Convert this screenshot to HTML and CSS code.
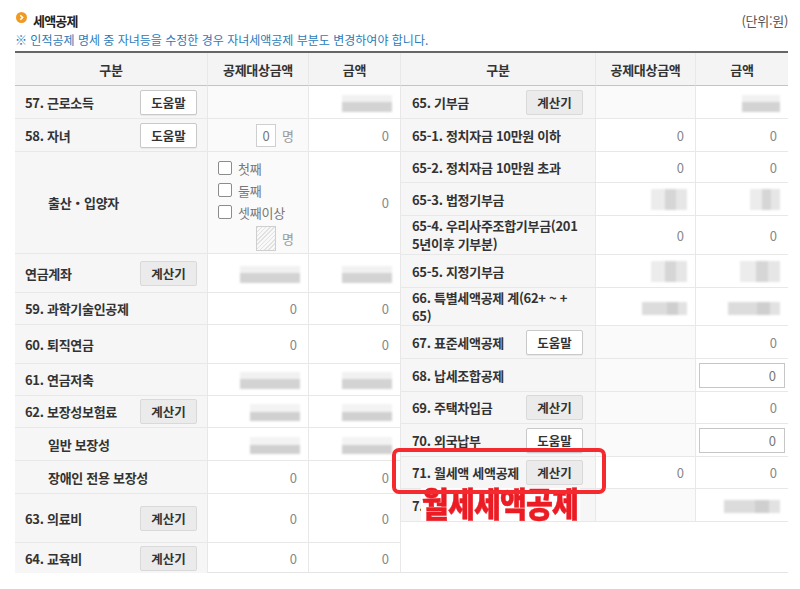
FILE: index.html
```html
<!DOCTYPE html>
<html lang="ko">
<head>
<meta charset="utf-8">
<title>세액공제</title>
<link rel="stylesheet" href="styles.css">
</head>
<body>
<div class="page">
  <div class="head">
    <h2 class="title"><svg class="bullet" width="11" height="11" viewBox="0 0 11 11"><circle cx="5.5" cy="5.5" r="5.5" fill="#f29a1f"/><path d="M4.3 3.2 L6.6 5.5 L4.3 7.8" fill="none" stroke="#fff" stroke-width="1.6"/></svg>세액공제</h2>
    <span class="unit">(단위:원)</span>
  </div>
  <p class="note">※ 인적공제 명세 중 자녀등을 수정한 경우 자녀세액공제 부분도 변경하여야 합니다.</p>

  <div class="grid">
    <table class="tbl tbl-left">
      <colgroup><col class="c1l"><col class="c2"><col class="c3"></colgroup>
      <thead>
        <tr><th>구분</th><th>공제대상금액</th><th>금액</th></tr>
      </thead>
      <tbody>
        <tr class="r33"><td class="lab"><div class="lab-in"><span>57. 근로소득</span><button class="btn help">도움말</button></div></td><td class="shade"></td><td class="num"><span class="blur bw50"></span></td></tr>
        <tr class="r33"><td class="lab"><div class="lab-in"><span>58. 자녀</span><button class="btn help">도움말</button></div></td><td class="shade cnt-cell"><span class="mini">0</span><span class="mu">명</span></td><td class="num">0</td></tr>
        <tr class="r102"><td class="lab sub">출산・입양자</td><td class="shade kids-cell">
          <div class="kids">
            <label class="ck"><span class="box"></span>첫째</label>
            <label class="ck"><span class="box"></span>둘째</label>
            <label class="ck"><span class="box"></span>셋째이상</label>
            <div class="hatchline"><span class="hatch"></span><span class="mu">명</span></div>
          </div>
        </td><td class="num">0</td></tr>
        <tr class="r39"><td class="lab"><div class="lab-in"><span>연금계좌</span><button class="btn calc">계산기</button></div></td><td class="num"><span class="blur bw60"></span></td><td class="num"><span class="blur bw50"></span></td></tr>
        <tr class="r32"><td class="lab">59. 과학기술인공제</td><td class="num">0</td><td class="num">0</td></tr>
        <tr class="r39"><td class="lab">60. 퇴직연금</td><td class="num">0</td><td class="num">0</td></tr>
        <tr class="r32"><td class="lab">61. 연금저축</td><td class="num"><span class="blur bw60"></span></td><td class="num"><span class="blur bw50"></span></td></tr>
        <tr class="r32"><td class="lab"><div class="lab-in"><span>62. 보장성보험료</span><button class="btn calc">계산기</button></div></td><td class="num"><span class="blur bw50 two"></span></td><td class="num"><span class="blur bw50 two"></span></td></tr>
        <tr class="r33"><td class="lab sub">일반 보장성</td><td class="num"><span class="blur bw50 two"></span></td><td class="num"><span class="blur bw50 two"></span></td></tr>
        <tr class="r33"><td class="lab sub">장애인 전용 보장성</td><td class="num">0</td><td class="num">0</td></tr>
        <tr class="r49"><td class="lab"><div class="lab-in"><span>63. 의료비</span><button class="btn calc">계산기</button></div></td><td class="num">0</td><td class="num">0</td></tr>
        <tr class="r30 last"><td class="lab"><div class="lab-in"><span>64. 교육비</span><button class="btn calc">계산기</button></div></td><td class="num">0</td><td class="num">0</td></tr>
      </tbody>
    </table>

    <table class="tbl tbl-right">
      <colgroup><col class="c1r"><col class="c2r"><col class="c3"></colgroup>
      <thead>
        <tr><th>구분</th><th>공제대상금액</th><th>금액</th></tr>
      </thead>
      <tbody>
        <tr class="r33"><td class="lab"><div class="lab-in"><span>65. 기부금</span><button class="btn calc">계산기</button></div></td><td class="shade"></td><td class="num"><span class="blur bw38"></span></td></tr>
        <tr class="r33"><td class="lab">65-1. 정치자금 10만원 이하</td><td class="num">0</td><td class="num">0</td></tr>
        <tr class="r31"><td class="lab">65-2. 정치자금 10만원 초과</td><td class="num">0</td><td class="num">0</td></tr>
        <tr class="r33"><td class="lab">65-3. 법정기부금</td><td class="num"><span class="blur bw36 tall"></span></td><td class="num"><span class="blur bw30 tall"></span></td></tr>
        <tr class="r39"><td class="lab two-line">65-4. 우리사주조합기부금(201<br>5년이후 기부분)</td><td class="num">0</td><td class="num">0</td></tr>
        <tr class="r33"><td class="lab">65-5. 지정기부금</td><td class="num"><span class="blur bw36 tall"></span></td><td class="num"><span class="blur bw40 tall"></span></td></tr>
        <tr class="r38"><td class="lab two-line">66. 특별세액공제 계(62+ ~ +<br>65)</td><td class="num"><span class="blur bw45 flat"></span></td><td class="num"><span class="blur bw52 flat"></span></td></tr>
        <tr class="r33"><td class="lab"><div class="lab-in"><span>67. 표준세액공제</span><button class="btn help">도움말</button></div></td><td class="shade"></td><td class="num">0</td></tr>
        <tr class="r33"><td class="lab">68. 납세조합공제</td><td class="shade"></td><td class="inp-cell"><span class="inp">0</span></td></tr>
        <tr class="r32"><td class="lab"><div class="lab-in"><span>69. 주택차입금</span><button class="btn calc">계산기</button></div></td><td class="shade"></td><td class="num">0</td></tr>
        <tr class="r33"><td class="lab"><div class="lab-in"><span>70. 외국납부</span><button class="btn help">도움말</button></div></td><td class="shade"></td><td class="inp-cell"><span class="inp">0</span></td></tr>
        <tr class="r32"><td class="lab"><div class="lab-in"><span>71. 월세액 세액공제</span><button class="btn calc">계산기</button></div></td><td class="num">0</td><td class="num">0</td></tr>
        <tr class="r33"><td class="lab">7.</td><td class="shade"></td><td class="num"><span class="blur bw56 flat"></span></td></tr>
      </tbody>
    </table>
  </div>

  <div class="anno-text">월세세액공제</div>
  <div class="anno-box"></div>
</div>
</body>
</html>
```

FILE: styles.css
```css
* { box-sizing: border-box; }

body {
  margin: 0;
  background: #fff;
  font-family: "Noto Sans CJK KR", "Noto Sans", sans-serif;
  color: #333;
}

.page {
  position: relative;
  width: 800px;
  padding: 0 12px 0 15px;
}

.head {
  display: flex;
  justify-content: space-between;
  align-items: center;
  height: 33px;
  padding-top: 7px;
}

.title {
  margin: 0;
  display: flex;
  align-items: center;
  gap: 6px;
  font-size: 13px;
  font-weight: 700;
  letter-spacing: -0.8px;
  color: #222;
}

.bullet {
  margin-left: 1px;
  margin-bottom: 6px;
}

.unit {
  font-size: 13px;
  color: #555;
  letter-spacing: -0.3px;
}

.note {
  margin: 0;
  font-size: 12px;
  line-height: 14px;
  letter-spacing: 0;
  color: #2b7bb9;
}

.grid {
  display: flex;
  align-items: flex-start;
  margin-top: 4px;
  border-top: 2px solid #666;
  border-bottom: 1px solid #e4e4e4;
  height: 522px;
}

.tbl {
  border-collapse: separate;
  border-spacing: 0;
  table-layout: fixed;
  font-size: 13px;
}

.tbl-left { width: 386px; flex: none; }
.tbl-right { width: 387px; flex: none; }

.c1l { width: 193px; }
.c1r { width: 195px; }
.c2 { width: 101px; }
.c2r { width: 100px; }
.c3 { width: 92px; }

.tbl th {
  height: 33px;
  background: #f4f4f4;
  border-bottom: 1px solid #c4c4c4;
  border-right: 1px solid #e8e8e8;
  font-weight: 700;
  letter-spacing: -0.3px;
  color: #333;
  padding: 0;
}

.tbl td {
  border-bottom: 1px solid #e8e8e8;
  border-right: 1px solid #e8e8e8;
  padding: 0;
  vertical-align: middle;
}

.tbl-right th:last-child,
.tbl-right td:last-child { border-right: none; }

.tbl tr.last td { border-bottom: none; }

.r30 td { height: 30px; }
.r31 td { height: 31px; }
.r32 td { height: 32px; }
.r33 td { height: 33px; }
.r38 td { height: 38px; }
.r39 td { height: 39px; }
.r49 td { height: 49px; }
.r102 td { height: 102px; }

.tbl td.lab {
  background: #f6f6f6;
  font-weight: 700;
  letter-spacing: -0.3px;
  color: #333;
  padding: 0 10px;
  white-space: nowrap;
}

.tbl-right td.lab { padding: 0 12px 0 11px; }

.tbl td.sub { padding-left: 33px; }

.tbl td.two-line { line-height: 18px; }

.lab-in {
  display: flex;
  justify-content: space-between;
  align-items: center;
}

.tbl td.shade { background: #fafafa; }

.tbl td.num {
  text-align: right;
  padding-right: 11px;
  color: #888;
}

.btn {
  width: 57px;
  height: 25px;
  padding: 0;
  border-radius: 2px;
  font-family: "Noto Sans CJK KR", sans-serif;
  font-size: 12.5px;
  font-weight: 700;
  color: #333;
  cursor: pointer;
}

.help {
  background: #fff;
  border: 1px solid #c9c9c9;
  box-shadow: 0 1px 1px rgba(0, 0, 0, 0.06);
}

.calc {
  background: #ebebeb;
  border: 1px solid #d9d9d9;
}

.cnt-cell {
  text-align: right;
  padding-right: 14px !important;
}

.mini {
  display: inline-block;
  width: 20px;
  height: 23px;
  border: 1px solid #cfcfcf;
  background: #fff;
  text-align: center;
  line-height: 21px;
  color: #777;
  vertical-align: middle;
}

.mu {
  display: inline-block;
  margin-left: 6px;
  color: #999;
  vertical-align: middle;
}

.tbl td.kids-cell { vertical-align: top; }

.kids {
  display: flex;
  flex-direction: column;
  padding: 5px 14px 0 10px;
}

.ck {
  display: flex;
  align-items: center;
  gap: 6px;
  height: 22px;
  color: #777;
  letter-spacing: -0.2px;
}

.box {
  width: 14px;
  height: 14px;
  border: 1px solid #8c8c8c;
  border-radius: 2px;
  background: #fff;
}

.hatchline {
  display: flex;
  justify-content: flex-end;
  align-items: center;
  margin-top: 3px;
}

.hatch {
  width: 20px;
  height: 25px;
  border: 1px solid #cfcfcf;
  background: repeating-linear-gradient(135deg, #e2e2e2 0 1px, #f8f8f8 1px 3px);
}

.blur {
  display: inline-block;
  height: 17px;
  vertical-align: middle;
  margin-right: -3px;
  background: linear-gradient(#f1f1f1 0 40%, #d3d3d3 40% 100%);
  filter: blur(1.3px);
}

.blur.two { background: linear-gradient(#f3f3f3 0 45%, #d0d0d0 45% 100%); }
.blur.tall { height: 21px; background: linear-gradient(90deg, #ececec 0 40%, #d6d6d6 40% 70%, #e6e6e6 70%); }
.blur.flat { height: 13px; background: linear-gradient(90deg, #dcdcdc 0 55%, #cfcfcf 55% 80%, #e2e2e2 80%); }

.bw30 { width: 30px; }
.bw36 { width: 36px; }
.bw38 { width: 38px; }
.bw40 { width: 40px; }
.bw45 { width: 45px; }
.bw50 { width: 50px; }
.bw52 { width: 52px; }
.bw56 { width: 56px; }
.bw60 { width: 60px; }

.tbl td.inp-cell { padding: 0 3px; }

.inp {
  display: block;
  width: 86px;
  height: 25px;
  border: 1px solid #c6c6c6;
  background: #fff;
  text-align: right;
  padding-right: 8px;
  line-height: 23px;
  color: #777;
}

.anno-box {
  position: absolute;
  left: 392px;
  top: 448px;
  width: 214px;
  height: 46px;
  border: 4px solid #f42a2f;
  border-radius: 7px;
}

.anno-text {
  position: absolute;
  left: 421px;
  top: 488px;
  padding: 0 2px 3px 1px;
  background: #fff;
  color: #ec1c24;
  font-size: 34px;
  font-weight: 900;
  line-height: 30px;
  letter-spacing: -1px;
  white-space: nowrap;
  -webkit-text-stroke: 0.5px #ec1c24;
  transform: scaleX(0.86);
  transform-origin: left top;
}
```
